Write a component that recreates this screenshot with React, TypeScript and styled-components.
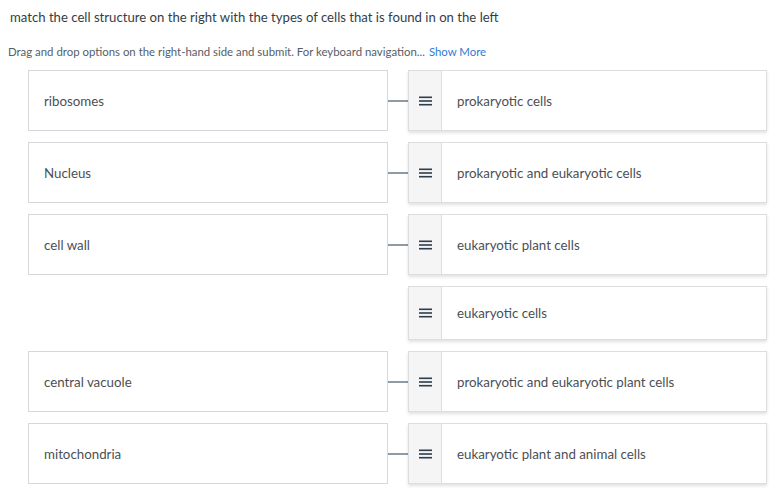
import React from "react";
import styled, { createGlobalStyle } from "styled-components";

const Global = createGlobalStyle`
  html, body { margin: 0; padding: 0; background: #fff; }
  body { font-family: Lato, "Noto Sans", sans-serif; }
`;

const Page = styled.div`
  width: 773px;
  height: 495px;
  box-sizing: border-box;
  padding: 8px 0 0 0;
  overflow: hidden;
`;

const Title = styled.div`
  padding-left: 10px;
  font-size: 13.15px;
  line-height: 18px;
  color: #333e48;
`;

const Hint = styled.div`
  margin-top: 18px;
  padding-left: 8px;
  font-size: 11.4px;
  line-height: 15px;
  color: #555e66;
`;

const ShowMore = styled.span`
  color: #2f7bd9;
  margin-left: 4px;
`;

const List = styled.div`
  margin-top: 11px;
  padding-left: 28px;
  display: flex;
  flex-direction: column;
  gap: 11px;
`;

const Row = styled.div<{ $h: number }>`
  display: grid;
  grid-template-columns: 360px 20px 359px;
  height: ${(p) => p.$h}px;
`;

const LeftBox = styled.div`
  box-sizing: border-box;
  border: 1px solid #d6d8db;
  display: flex;
  align-items: center;
  padding-left: 15px;
  font-size: 13.3px;
  color: #4a4f55;
`;

const Empty = styled.div``;

const Connector = styled.div<{ $on: boolean }>`
  display: flex;
  align-items: center;
  &::before {
    content: "";
    display: ${(p) => (p.$on ? "block" : "none")};
    width: 100%;
    height: 2px;
    background: #8c9ba6;
  }
`;

const Card = styled.div`
  box-sizing: border-box;
  border: 1px solid #dcdee0;
  box-shadow: 0 2px 3px rgba(0, 0, 0, 0.12);
  display: flex;
  background: #fff;
`;

const Handle = styled.div`
  width: 32px;
  flex: none;
  background: #f5f5f5;
  border-right: 1px solid #dcdee0;
  display: flex;
  align-items: center;
  justify-content: center;
`;

const Label = styled.div`
  display: flex;
  align-items: center;
  padding-left: 15px;
  font-size: 13.3px;
  color: #4a4f55;
`;

const Grip = () => (
  <svg width="13" height="10" viewBox="0 0 13 10">
    <rect x="0" y="0.5" width="13" height="1.6" fill="#2f3e4c" />
    <rect x="0" y="4.2" width="13" height="1.6" fill="#2f3e4c" />
    <rect x="0" y="7.9" width="13" height="1.6" fill="#2f3e4c" />
  </svg>
);

const rows: { left: string | null; right: string; h: number }[] = [
  { left: "ribosomes", right: "prokaryotic cells", h: 61 },
  { left: "Nucleus", right: "prokaryotic and eukaryotic cells", h: 61 },
  { left: "cell wall", right: "eukaryotic plant cells", h: 61 },
  { left: null, right: "eukaryotic cells", h: 54 },
  { left: "central vacuole", right: "prokaryotic and eukaryotic plant cells", h: 61 },
  { left: "mitochondria", right: "eukaryotic plant and animal cells", h: 61 },
];

export default function App() {
  return (
    <>
      <Global />
      <Page>
        <Title>match the cell structure on the right with the types of cells that is found in on the left</Title>
        <Hint>
          Drag and drop options on the right-hand side and submit. For keyboard navigation...
          <ShowMore>Show More</ShowMore>
        </Hint>
        <List>
          {rows.map((r, i) => (
            <Row key={i} $h={r.h}>
              {r.left ? <LeftBox>{r.left}</LeftBox> : <Empty />}
              <Connector $on={!!r.left} />
              <Card>
                <Handle>
                  <Grip />
                </Handle>
                <Label>{r.right}</Label>
              </Card>
            </Row>
          ))}
        </List>
      </Page>
    </>
  );
}
